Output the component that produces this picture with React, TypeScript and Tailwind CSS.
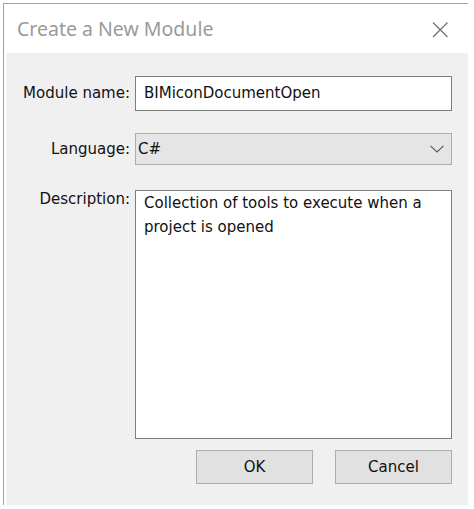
import React from "react";

const font = { fontFamily: '"DejaVu Sans", sans-serif' };

export default function App() {
  return (
    <div className="h-[509px] w-[474px] bg-white pl-[3px] pt-[3px]">
      <div className="flex h-[502px] w-[465px] flex-col border-l border-t border-[#a0a0a0] bg-white">
        {/* title bar */}
        <div className="flex h-[49px] shrink-0 items-center justify-between pl-[13px] pr-[19px]">
          <span
            className="text-[19.5px] text-[#9a9a9a]"
            style={{ fontFamily: '"Noto Sans", sans-serif' }}
          >
            Create a New Module
          </span>
          <svg width="17" height="17" viewBox="0 0 17 17" className="mt-[2px]">
            <path d="M1 1.5 L15.5 16 M15.5 1.5 L1 16" stroke="#6b6b6b" strokeWidth="1.1" fill="none" />
          </svg>
        </div>

        {/* body */}
        <div
          className="ml-[2px] flex flex-1 flex-col bg-[#f0f0f0] pt-[23px] text-[15px] text-[#111]"
          style={font}
        >
          <div className="flex items-center">
            <label className="w-[124px] text-right">Module name:</label>
            <div className="ml-[5px] flex h-[35px] w-[317px] items-center border border-[#7f7f7f] bg-white pl-[8px]">
              BIMiconDocumentOpen
            </div>
          </div>

          <div className="mt-[22px] flex items-center">
            <label className="w-[124px] text-right">Language:</label>
            <div className="ml-[5px] flex h-[32px] w-[317px] items-center justify-between border border-[#adadad] bg-[#e5e5e5] pl-[2px] pr-[7px]">
              <span>C#</span>
              <svg width="14" height="8" viewBox="0 0 14 8">
                <path d="M0.5 0.8 L7 7 L13.5 0.8" stroke="#555" strokeWidth="1.1" fill="none" />
              </svg>
            </div>
          </div>

          <div className="mt-[25px] flex items-start">
            <label className="w-[124px] text-right leading-[18px]">Description:</label>
            <div className="ml-[5px] h-[249px] w-[317px] border border-[#7f7f7f] bg-white pl-[8px] leading-[24px]">
              Collection of tools to execute when a
              <br />
              project is opened
            </div>
          </div>

          <div className="mt-[11px] flex justify-end gap-[22px] pr-[16px]">
            <button className="h-[34px] w-[117px] border border-[#adadad] bg-[#e1e1e1]">OK</button>
            <button className="h-[34px] w-[117px] border border-[#adadad] bg-[#e1e1e1]">Cancel</button>
          </div>
        </div>
      </div>
    </div>
  );
}
